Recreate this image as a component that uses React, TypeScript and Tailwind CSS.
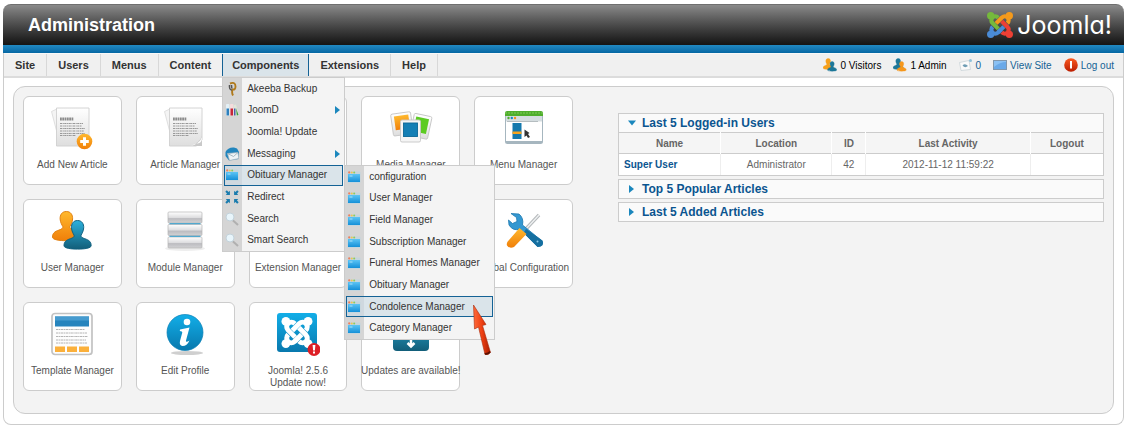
import React from "react";

const JOOMLA_BAND = "M15.6 13.5 L10.2 18.9 C8.6 20.4 6.4 20.3 5.05 18.95 C3.7 17.5 3.6 15.3 5.2 13.6";

function JoomlaMark({ colors }: { colors: [string, string, string, string] }) {
  return (
    <g>
      {colors.map((color, i) => (
        <g key={i} transform={`rotate(${i * 90} 12 12)`}>
          <path d={JOOMLA_BAND} fill="none" stroke={color} strokeWidth="3.8" />
          <circle cx="3.400" cy="20.600" r="3.4" fill={color} />
        </g>
      ))}
      <path d="M10.4 18.7 L13 16.1" stroke={colors[0]} strokeWidth="3.8" />
    </g>
  );
}

function Person({ x, y, scale, fill, stroke }: { x: number; y: number; scale: number; fill: string; stroke: string }) {
  return (
    <path
      transform={`translate(${x} ${y}) scale(${scale})`}
      d="M14 0 C18.5 0 20.5 3.5 20.3 7.5 C20.1 11 18.5 13.5 17.6 15.2 C17.3 17 18.5 17.8 21.5 18.8 C26 20.3 28 22 28 26 C28 28.5 21 29.5 14 29.5 C7 29.5 0 28.5 0 26 C0 22 2 20.3 6.5 18.8 C9.5 17.8 10.7 17 10.4 15.2 C9.5 13.5 7.9 11 7.7 7.5 C7.5 3.5 9.5 0 14 0 Z"
      fill={fill}
      stroke={stroke}
      strokeWidth="1"
    />
  );
}

function Gradients() {
  return (
    <svg className="absolute h-0 w-0" aria-hidden="true">
      <defs>
        <linearGradient id="orange" x1="0" y1="0" x2="0" y2="1">
          <stop offset="0" stopColor="#ffb92e" />
          <stop offset="1" stopColor="#f07f09" />
        </linearGradient>
        <linearGradient id="teal" x1="0" y1="0" x2="0" y2="1">
          <stop offset="0" stopColor="#2bb0dc" />
          <stop offset="1" stopColor="#125e79" />
        </linearGradient>
        <linearGradient id="blue" x1="0" y1="0" x2="0" y2="1">
          <stop offset="0" stopColor="#12aee8" />
          <stop offset="1" stopColor="#0878ad" />
        </linearGradient>
        <linearGradient id="sky" x1="0" y1="0" x2="0" y2="1">
          <stop offset="0" stopColor="#5cc4f5" />
          <stop offset="1" stopColor="#1590d8" />
        </linearGradient>
        <linearGradient id="steel" x1="0" y1="0" x2="0" y2="1">
          <stop offset="0" stopColor="#ffffff" />
          <stop offset="0.5" stopColor="#dedee0" />
          <stop offset="0.6" stopColor="#bcbcc0" />
          <stop offset="1" stopColor="#d2d2d4" />
        </linearGradient>
        <linearGradient id="paper" x1="0" y1="0" x2="0" y2="1">
          <stop offset="0" stopColor="#ffffff" />
          <stop offset="1" stopColor="#dedede" />
        </linearGradient>
        <linearGradient id="red" x1="0" y1="0" x2="0" y2="1">
          <stop offset="0" stopColor="#fb5a20" />
          <stop offset="1" stopColor="#bb1d00" />
        </linearGradient>
        <linearGradient id="arrow" x1="0" y1="0" x2="1" y2="0">
          <stop offset="0" stopColor="#ff6a3a" />
          <stop offset="0.5" stopColor="#ee3f12" />
          <stop offset="1" stopColor="#a81c00" />
        </linearGradient>
      </defs>
    </svg>
  );
}

function ArticleIcon({ add }: { add?: boolean }) {
  return (
    <svg viewBox="0 0 44 44" className="h-11 w-11" aria-hidden="true">
      <path d="M1.500 5.500 L8 2.500 L10 38 Z" fill="#f4f4f4" stroke="#d8d8d8" strokeWidth="0.8" />
      <path d="M6.500 2 H39 V34 L33.500 40 H6.500 Z" fill="url(#paper)" stroke="#cfcfcf" strokeWidth="0.9" />
      <path d="M27 40 C33 38 37 35 39 30 V40 Z" fill="#c9c9c9" />
      <path d="M27 40 C33 39 37 36 39 31 C39 36 37 37.500 33 37.500 Z" fill="#fff" />
      <path d="M10 13 H23.500" stroke="#8c8c8c" strokeWidth="2.800" strokeDasharray="1.8 0.5" />
      <path
        d="M10 17.500 H33 M10 20 H32 M10 22.500 H35 M10 25 H34 M10 27.500 H35 M10 29.500 H26"
        stroke="#989898"
        strokeWidth="1.1"
        strokeDasharray="2.2 0.6 1 0.5"
      />
      {add && (
        <g>
          <circle cx="34.500" cy="35.500" r="7.800" fill="url(#orange)" />
          <path d="M34.500 31.200 V39.800 M30.200 35.500 H38.800" stroke="#fff" strokeWidth="3" />
        </g>
      )}
    </svg>
  );
}

function UsersIcon() {
  return (
    <svg viewBox="0 0 44 44" className="h-11 w-11" aria-hidden="true">
      <Person x={2.5} y={2.5} scale={0.99} fill="url(#orange)" stroke="#e08010" />
      <Person x={14} y={11.5} scale={0.97} fill="url(#teal)" stroke="#0f5f7e" />
    </svg>
  );
}

function ModuleIcon() {
  return (
    <svg viewBox="0 0 44 44" className="h-11 w-11" aria-hidden="true">
      <ellipse cx="22" cy="39.500" rx="20" ry="2.500" fill="#eeeeee" />
      <rect x="6.500" y="10" width="31" height="20" fill="#1da4de" />
      {[3, 15.5, 28].map((y) => (
        <rect key={y} x="5" y={y} width="34" height="11" rx="1" fill="url(#steel)" stroke="#b4b4b6" strokeWidth="0.700" />
      ))}
    </svg>
  );
}

function ExtensionIcon() {
  return (
    <svg viewBox="0 0 44 44" className="h-11 w-11" aria-hidden="true">
      <path d="M6 12 H17 C15 5 28 5 26 12 H38 V38 H6 Z" fill="url(#blue)" />
    </svg>
  );
}

function MediaIcon() {
  return (
    <svg viewBox="0 0 44 44" className="h-11 w-11" aria-hidden="true">
      <g stroke="#c6c6c6" strokeWidth="0.9">
        <g transform="rotate(-8 12 18)">
          <rect x="3" y="7" width="20" height="22" rx="1.500" fill="url(#paper)" />
          <rect x="6" y="9.500" width="14.500" height="14" fill="url(#orange)" stroke="none" />
        </g>
        <g transform="rotate(12 33 20)">
          <rect x="23" y="9" width="18" height="23" rx="1.500" fill="url(#paper)" />
          <rect x="25.500" y="12" width="13" height="15" fill="#5ccb22" stroke="none" />
        </g>
        <rect x="11.500" y="14" width="20" height="22" rx="1.500" fill="#f5f5f5" />
        <rect x="14.500" y="17" width="14" height="13.500" fill="#147fb5" stroke="#0d6797" />
      </g>
    </svg>
  );
}

function MenuManagerIcon() {
  return (
    <svg viewBox="0 0 44 44" className="h-11 w-11" aria-hidden="true">
      <rect x="3" y="5" width="38" height="33" rx="2.500" fill="#a6b6bf" />
      <rect x="4" y="9" width="36" height="26" fill="#fff" />
      <path d="M3 10 V7 Q3 5 5.500 5 H38.500 Q41 5 41 7 V10 Z" fill="#4fae2c" />
      <path d="M3 7 H41" stroke="#7fca58" strokeWidth="1" strokeDasharray="2 1" />
      <rect x="4" y="10" width="36" height="5.500" fill="#d5dde0" />
      <circle cx="6.500" cy="12" r="1.200" fill="#4fae2c" />
      <circle cx="9.800" cy="12" r="1.200" fill="#1688c2" />
      <circle cx="13" cy="12" r="1.200" fill="#f5901a" />
      <path d="M5 15.500 H36" stroke="#b5bdc0" />
      <rect x="10.500" y="17" width="9" height="16" fill="#1579ad" />
      <rect x="10.500" y="25.500" width="9" height="2.500" fill="#f7a51e" />
      <path d="M22.500 23.500 L27.500 27 L26 28 L28 31 L26 32 L24.500 29.500 L22.500 31 Z" fill="#333" />
    </svg>
  );
}

function ToolsIcon() {
  return (
    <svg viewBox="0 0 44 44" className="h-11 w-11" aria-hidden="true">
      <path d="M37 6 L21 23" stroke="#b5b9bb" strokeWidth="3.400" />
      <path d="M37 6 L22 22" stroke="#f0f2f3" strokeWidth="1.300" />
      <path
        d="M9 4.500 L17 5 Q22 9 20.500 16 L40 32 Q42 37 35.500 37.500 L18 20 Q11 22.500 7 16 L6.500 11 L10.500 14.500 L15 12.500 L14.500 8.500 Z"
        fill="#3598d1"
        stroke="#1c78b0"
        strokeWidth="0.800"
      />
      <path d="M24 20 L40.500 31.500 Q43 37.500 35.500 38 L21.500 24 Z" fill="#156fa0" />
      <circle cx="35.500" cy="32.500" r="1" fill="#8cc9e6" />
      <path d="M17.500 19 L24.500 25 L12 38 Q7.500 40 5 36.500 Q4 33.500 7 31 Z" fill="url(#orange)" />
    </svg>
  );
}

function TemplateIcon() {
  return (
    <svg viewBox="0 0 44 44" className="h-11 w-11" aria-hidden="true">
      <rect x="2" y="1.500" width="40" height="41" rx="3" fill="#fdfdfd" stroke="#c2c2c2" strokeWidth="1.700" />
      <rect x="5" y="4.500" width="34" height="10" fill="#2684bd" />
      <rect x="5" y="4.500" width="34" height="4" fill="#469bcf" />
      <path
        d="M6 17.500 H35 M6 21 H37 M6 24.500 H38 M6 28 H36 M6 31 H37"
        stroke="#b4b4b4"
        strokeWidth="1"
        strokeDasharray="2.5 0.5 1.3 0.5"
      />
      <rect x="5" y="34.500" width="10" height="5.500" fill="#fbb03b" />
      <rect x="17" y="34.500" width="10" height="5.500" fill="#fbb03b" />
      <rect x="29" y="34.500" width="10" height="5.500" fill="#fbb03b" />
    </svg>
  );
}

function ProfileIcon() {
  return (
    <svg viewBox="0 0 44 44" className="h-11 w-11" aria-hidden="true">
      <ellipse cx="24" cy="41" rx="16" ry="2" fill="#cfcfcf" />
      <circle cx="22" cy="20.500" r="18" fill="url(#blue)" stroke="#0a7fb6" strokeWidth="0.700" />
      <circle cx="24" cy="10" r="3.300" fill="#fff" />
      <path
        d="M17 17.500 Q22 16.500 26.500 15.500 L23 28.500 Q22.500 31 26.500 28.500 Q24 34 19.500 34 Q16 33.500 17 29 L19.300 20.500 Q19.500 19 16.800 19 Z"
        fill="#fff"
      />
    </svg>
  );
}

function JoomlaUpdateIcon() {
  return (
    <svg viewBox="0 0 44 44" className="h-11 w-11" aria-hidden="true">
      <rect x="1" y="1" width="40" height="39" rx="3" fill="url(#blue)" />
      <g transform="translate(5.500 5) scale(1.290)">
        <JoomlaMark colors={["#fff", "#fff", "#fff", "#fff"]} />
      </g>
      <circle cx="38" cy="37.500" r="6.500" fill="#dd1f26" />
      <path d="M36.600 33 h2.800 l-0.500 5.500 h-1.800 Z M37 39.500 h2 v2 h-2 Z" fill="#fff" />
    </svg>
  );
}

function UpdatesIcon() {
  return (
    <svg viewBox="0 0 44 44" className="h-11 w-11" aria-hidden="true">
      <rect x="4" y="2" width="36" height="37" rx="4" fill="url(#teal)" />
      <path d="M22 12 V33 M18.500 31 L22 34.500 L25.500 31" stroke="#fff" strokeWidth="2.500" fill="none" />
    </svg>
  );
}

const WindowIcon = () => (
  <svg viewBox="0 0 14 14" className="h-3.5 w-3.5" aria-hidden="true">
    <rect x="0.500" y="1.500" width="13" height="11.500" rx="1" fill="#c4d5dd" />
    <rect x="1" y="4" width="12" height="8" fill="url(#sky)" />
    <circle cx="2.200" cy="2.400" r="1.100" fill="#f0805c" />
    <circle cx="4.800" cy="2.400" r="1" fill="#f0c550" />
    <circle cx="7.200" cy="2.400" r="1" fill="#8ccb5c" />
    <path d="M2.500 6 h3" stroke="#a9e2fb" strokeWidth="1" />
  </svg>
);

const AkeebaIcon = () => (
  <svg viewBox="0 0 14 14" className="h-3.5 w-3.5" aria-hidden="true">
    <path d="M5 1.500 Q10.500 -0.500 10.500 4.500 Q10.500 8 7.500 7.500 Q6.500 10.500 8 13.500" fill="none" stroke="#b07a1c" strokeWidth="1.900" />
    <path d="M4.500 3 Q4 8 7 8 M6.500 3 L6.800 6.500" fill="none" stroke="#555" strokeWidth="1.500" />
  </svg>
);

const JoomDIcon = () => (
  <svg viewBox="0 0 14 14" className="h-3.5 w-3.5" aria-hidden="true">
    <rect x="1" y="1" width="3.500" height="12" rx="1" fill="#e4f0f5" />
    <rect x="1.500" y="5.500" width="2.500" height="7" fill="#2e80bd" />
    <rect x="5" y="1" width="3.500" height="12" rx="1" fill="#f4dddd" />
    <rect x="5.500" y="5.500" width="2.500" height="7" fill="#c52638" />
    <path d="M9 2 L11 1.500 L13.800 12.500 L9 13 Z" fill="#dfe8d8" />
    <rect x="9" y="5.500" width="1.500" height="7" fill="#4a5faa" />
    <path d="M11 5 L13.500 12 L11.800 12.500 Z" fill="#3b9e3a" />
  </svg>
);

const MessagingIcon = () => (
  <svg viewBox="0 0 14 14" className="h-3.5 w-3.5" aria-hidden="true">
    <path d="M0.500 5 Q3 0 9 0.500 L12 1.500 L14 5 L13.500 12 L4 13.500 L0.500 9 Z" fill="#2285bd" />
    <path d="M2.500 6.500 L13 5.500 L13.800 11.500 L4.500 13.500 Z" fill="#edf3f6" stroke="#a3b3bc" strokeWidth="0.700" />
    <path d="M2.500 6.500 L8.500 9.500 L13 5.500" fill="none" stroke="#96a9b4" strokeWidth="0.800" />
  </svg>
);

const RedirectIcon = () => (
  <svg viewBox="0 0 14 14" className="h-3.5 w-3.5" aria-hidden="true">
    {[0, 90, 180, 270].map((angle) => (
      <path
        key={angle}
        transform={`rotate(${angle} 7 7)`}
        d="M0.300 1.800 L1.800 0.300 L3.600 2 L4.900 0.800 L4.900 4.900 L0.800 4.900 L2 3.600 Z"
        fill="#1b7cae"
      />
    ))}
  </svg>
);

const SearchIcon = () => (
  <svg viewBox="0 0 14 14" className="h-3.5 w-3.5" aria-hidden="true">
    <path d="M7.500 8 L13 13" stroke="#b0b0b0" strokeWidth="2" />
    <circle cx="5" cy="5" r="4" fill="#e8f5fb" stroke="#c3d2da" strokeWidth="1" />
  </svg>
);

const UsersSmall = ({ back, front, flip }: { back: string; front: string; flip?: boolean }) => (
  <svg viewBox="0 0 14 14" className="h-3.5 w-3.5" aria-hidden="true">
    <Person x={0} y={0.5} scale={0.37} fill={back} stroke={back} />
    <Person x={flip ? 4 : 4.5} y={3.5} scale={0.33} fill={front} stroke={front} />
  </svg>
);

const MessageSmall = () => (
  <svg viewBox="0 0 14 14" className="h-3.5 w-3.5" aria-hidden="true">
    <path d="M0.500 4.500 L10 2.500 L11.500 11.500 L2 12.500 Z" fill="#fafafa" stroke="#c9d3d8" strokeWidth="0.800" />
    <path d="M3.500 7.500 Q6 5 9 8 Q6 10.500 3.500 7.500 Z" fill="#6f9db4" />
    <circle cx="11.500" cy="2.500" r="1.500" fill="#8fc1d9" />
  </svg>
);

const ScreenSmall = () => (
  <svg viewBox="0 0 14 14" className="h-3.5 w-3.5" aria-hidden="true">
    <rect x="0.500" y="2.500" width="13" height="9" fill="#6aa9e8" stroke="#8197ac" />
    <path d="M1 9 Q7 4 13 4 V3 H1 Z" fill="#8bc1f3" />
  </svg>
);

const LogoutSmall = () => (
  <svg viewBox="0 0 14 14" className="h-3.5 w-3.5" aria-hidden="true">
    <circle cx="7" cy="7" r="6.800" fill="url(#red)" />
    <path d="M7 3 V10.500" stroke="#fff" strokeWidth="2" />
  </svg>
);

type MenuEntry = { label: string; icon?: React.ReactNode; more?: boolean; active?: boolean };

const componentMenu: MenuEntry[] = [
  { label: "Akeeba Backup", icon: <AkeebaIcon /> },
  { label: "JoomD", icon: <JoomDIcon />, more: true },
  { label: "Joomla! Update" },
  { label: "Messaging", icon: <MessagingIcon />, more: true },
  { label: "Obituary Manager", icon: <WindowIcon />, active: true },
  { label: "Redirect", icon: <RedirectIcon /> },
  { label: "Search", icon: <SearchIcon /> },
  { label: "Smart Search", icon: <SearchIcon /> },
];

const obituaryMenu: MenuEntry[] = [
  "configuration",
  "User Manager",
  "Field Manager",
  "Subscription Manager",
  "Funeral Homes Manager",
  "Obituary Manager",
  "Condolence Manager",
  "Category Manager",
].map((label) => ({ label, icon: <WindowIcon />, active: label === "Condolence Manager" }));

function MenuList({ entries }: { entries: MenuEntry[] }) {
  return (
    <ul className="grid h-[175px] auto-rows-fr border border-[#ccc] bg-[linear-gradient(to_right,#d5d5d5_19px,#f4f4f4_19px)] text-[10px] leading-3 font-normal text-[#333]">
      {entries.map((entry) => (
        <li key={entry.label} className="flex px-px">
          <a
            href="#"
            className={
              entry.active
                ? "flex flex-1 items-center border border-[#146295] bg-[linear-gradient(to_right,#cfd8df_17px,#dae4ea_17px)]"
                : "flex flex-1 items-center border border-transparent"
            }
          >
            <span className="mr-2 flex w-3.5 shrink-0">{entry.icon}</span>
            <span className="flex-1 whitespace-nowrap">{entry.label}</span>
            {entry.more && (
              <svg viewBox="0 0 5 8" className="mr-0.5 h-2 w-[5px]" aria-hidden="true">
                <path d="M0 0 L5 4 L0 8 Z" fill="#1b87bd" />
              </svg>
            )}
          </a>
        </li>
      ))}
    </ul>
  );
}

function Cursor() {
  return (
    <svg viewBox="0 0 22 52" className="pointer-events-none absolute top-[139px] left-[128px] h-[52px] w-[22px]" aria-hidden="true">
      <path d="M1.500 1 L14 20.500 L10.500 21.500 L18.500 48.500 Q16 51.500 13 50.500 L6.500 23 L2.500 25 Z" fill="url(#arrow)" stroke="#a82a0c" strokeWidth="0.600" />
      <path d="M13 50.500 Q16 51.500 18.500 48.500 L18 47 Q15 49.500 12.500 49 Z" fill="#5c1204" />
    </svg>
  );
}

const cards: { label: string; icon: React.ReactNode }[] = [
  { label: "Add New Article", icon: <ArticleIcon add /> },
  { label: "Article Manager", icon: <ArticleIcon /> },
  { label: "Category Manager", icon: <ArticleIcon /> },
  { label: "Media Manager", icon: <MediaIcon /> },
  { label: "Menu Manager", icon: <MenuManagerIcon /> },
  { label: "User Manager", icon: <UsersIcon /> },
  { label: "Module Manager", icon: <ModuleIcon /> },
  { label: "Extension Manager", icon: <ExtensionIcon /> },
  { label: "Language Manager", icon: <MediaIcon /> },
  { label: "Global Configuration", icon: <ToolsIcon /> },
  { label: "Template Manager", icon: <TemplateIcon /> },
  { label: "Edit Profile", icon: <ProfileIcon /> },
  { label: "Joomla! 2.5.6 Update now!", icon: <JoomlaUpdateIcon /> },
  { label: "Updates are available!", icon: <UpdatesIcon /> },
];

function PanelTitle({ title, open }: { title: string; open?: boolean }) {
  return (
    <h3>
      <button
        type="button"
        aria-expanded={!!open}
        className="flex h-[18px] w-full items-center bg-[#fafafa] pl-[9px] text-left text-[12px] leading-4 font-bold text-[#0b5590]"
      >
        <svg viewBox="0 0 8 8" className="mr-1.5 h-2 w-2" aria-hidden="true">
          <path d={open ? "M0 1.500 H8 L4 6.500 Z" : "M1 0 L6 4 L1 8 Z"} fill="#1b87bd" />
        </svg>
        {title}
      </button>
    </h3>
  );
}

export default function App() {
  const tab = "flex h-full items-center border-r border-[#d8d8d8] px-[11px]";
  return (
    <div className="mt-1 mr-1.5 ml-[3px] font-['Liberation_Sans',Arial,sans-serif] text-[10px] leading-[13px] text-[#666]">
      <Gradients />
      <header>
        <div className="flex h-[41px] items-center justify-between rounded-t-lg border-t border-[#6f6f6f] bg-linear-to-b from-[#8a8a8a] to-[#141414] pr-3 pl-[25px]">
          <h1 className="text-[18px] leading-6 font-bold text-white">Administration</h1>
          <a href="#" className="flex items-center gap-1 text-white">
            <svg viewBox="0 0 24 24" className="h-[26px] w-[26px]" aria-hidden="true">
              <JoomlaMark colors={["#4a8bd6", "#75b93c", "#f59a1b", "#ee4035"]} />
            </svg>
            <span className="font-['Inter',sans-serif] text-[25px] leading-7 font-normal [font-feature-settings:'cv11']">Joomla!</span>
          </a>
        </div>
        <div className="h-2 bg-linear-to-b from-[#2189c2] to-[#0567a3]" />
      </header>

      <div className="rounded-b-lg border border-t-0 border-[#ccc]">
        <div className="flex h-[25px] items-center justify-between border-t border-b-2 border-t-[#f8f8f8] border-b-[#dcdcdc] bg-[#f0f0f0] pr-[9px]">
          <nav className="flex h-full text-[11px] font-bold text-[#333]">
            <button type="button" className={tab}>Site</button>
            <button type="button" className={tab}>Users</button>
            <button type="button" className={tab}>Menus</button>
            <button type="button" className="flex h-full items-center px-[11px]">Content</button>
            <div className="relative h-full">
              <button type="button" aria-expanded="true" className="flex h-full items-center border-x border-[#146295] bg-[#dae4ea] px-[9px]">
                Components
              </button>
              <div className="absolute top-full left-0 z-10 mt-px w-[123px]">
                <MenuList entries={componentMenu} />
                <div className="absolute top-[88px] left-[122px] w-[151px]">
                  <MenuList entries={obituaryMenu} />
                  <Cursor />
                </div>
              </div>
            </div>
            <button type="button" className={tab}>Extensions</button>
            <button type="button" className={tab}>Help</button>
          </nav>
          <div className="flex items-center gap-3 text-black">
            <span className="flex items-center gap-[3px]"><UsersSmall back="#f6a01b" front="#1c7799" />0 Visitors</span>
            <span className="flex items-center gap-[3px]"><UsersSmall back="#1c7799" front="#f6971b" flip />1 Admin</span>
            <a href="#" className="flex items-center gap-[3px] text-[#146295]"><MessageSmall />0</a>
            <a href="#" className="flex items-center gap-[3px] text-[#146295]"><ScreenSmall />View Site</a>
            <a href="#" className="flex items-center gap-[3px] text-[#146295]"><LogoutSmall />Log out</a>
          </div>
        </div>

        <main className="mx-[9px] mt-2 mb-2.5 flex items-start rounded-xl border border-[#ccc] bg-[#f3f3f3] px-[9px] pt-[9px] pb-[22px]">
          <section className="mr-[45px] grid w-[550px] shrink-0 grid-cols-5 gap-3.5">
            {cards.map((card) => (
              <a
                key={card.label}
                href="#"
                className="flex h-[89px] flex-col items-center rounded-md border border-[#ccc] bg-white pt-[9px] text-center text-[#555]"
              >
                {card.icon}
                <span className={card.label.startsWith("Joomla") ? "mt-[9px] w-16 leading-3" : "mt-[9px] leading-3 whitespace-nowrap"}>
                  {card.label}
                </span>
              </a>
            ))}
          </section>

          <section className="mt-[17px] flex flex-1 flex-col gap-[3px]">
            <div className="border border-[#ccc] bg-white">
              <PanelTitle title="Last 5 Logged-in Users" open />
              <table className="w-full table-fixed border-t border-[#ccc] text-center">
                <thead>
                  <tr className="h-[21px] border-b border-[#ccc] bg-[#f5f5f5]">
                    <th className="w-[21%] border-r border-white">Name</th>
                    <th className="w-[23%] border-r border-white">Location</th>
                    <th className="w-[7%] border-r border-white">ID</th>
                    <th className="w-[34%] border-r border-white">Last Activity</th>
                    <th className="w-[15%]">Logout</th>
                  </tr>
                </thead>
                <tbody>
                  <tr className="h-[21px]">
                    <td className="border-r border-[#eee] pl-[5px] text-left">
                      <a href="#" className="font-bold text-[#0b5590]">Super User</a>
                    </td>
                    <td className="border-r border-[#eee]">Administrator</td>
                    <td className="border-r border-[#eee]">42</td>
                    <td className="border-r border-[#eee]">2012-11-12 11:59:22</td>
                    <td />
                  </tr>
                </tbody>
              </table>
            </div>
            <div className="border border-[#ccc]">
              <PanelTitle title="Top 5 Popular Articles" />
            </div>
            <div className="border border-[#ccc]">
              <PanelTitle title="Last 5 Added Articles" />
            </div>
          </section>
        </main>
      </div>
    </div>
  );
}
